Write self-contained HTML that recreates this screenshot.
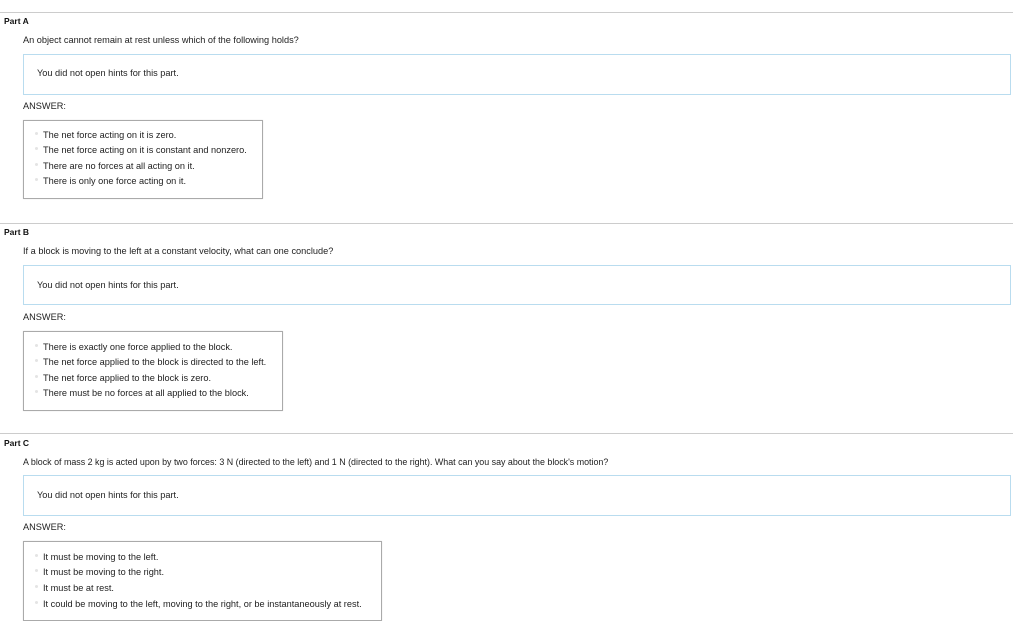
<!DOCTYPE html>
<html><head><style>
body{margin:0;width:1024px;height:621px;background:#fff;font-family:"Liberation Sans",Arial,sans-serif;color:#222;position:relative;overflow:hidden;font-size:9.2px}
.a{position:absolute;white-space:nowrap;line-height:10px}
.hr{position:absolute;left:0;width:1013px;height:1px;background:#ccc}
.h{font-weight:bold;font-size:8.5px;color:#111}
.hint{position:absolute;left:23px;width:988px;height:39px;border:1px solid #b9dcef;box-sizing:border-box}
.box{position:absolute;left:23px;border:1px solid #aaa;box-sizing:border-box;box-shadow:0 0 1px #ddd}
.r{position:absolute;width:3px;height:3px;border-radius:50%;background:#e4e4e4;left:12px}
</style></head><body>
<div class="hr" style="top:12px"></div>
<div class="a h" style="left:4px;top:16px">Part A</div>
<div class="a" style="left:23px;top:35px">An object cannot remain at rest unless which of the following holds?</div>
<div class="hint" style="top:54px;height:41px"></div>
<div class="a" style="left:37px;top:68px">You did not open hints for this part.</div>
<div class="a" style="left:23px;top:101px">ANSWER:</div>
<div class="box" style="top:120px;width:240px;height:79px"></div>
<div class="a" style="left:43px;top:130px">The net force acting on it is zero.</div>
<div class="a" style="left:43px;top:145px">The net force acting on it is constant and nonzero.</div>
<div class="a" style="left:43px;top:161px">There are no forces at all acting on it.</div>
<div class="a" style="left:43px;top:176px">There is only one force acting on it.</div>
<div class="r" style="left:35px;top:132px"></div><div class="r" style="left:35px;top:147px"></div><div class="r" style="left:35px;top:163px"></div><div class="r" style="left:35px;top:178px"></div>

<div class="hr" style="top:223px"></div>
<div class="a h" style="left:4px;top:227px">Part B</div>
<div class="a" style="left:23px;top:246px">If a block is moving to the left at a constant velocity, what can one conclude?</div>
<div class="hint" style="top:265px;height:40px"></div>
<div class="a" style="left:37px;top:280px">You did not open hints for this part.</div>
<div class="a" style="left:23px;top:312px">ANSWER:</div>
<div class="box" style="top:331px;width:260px;height:80px"></div>
<div class="a" style="left:43px;top:342px">There is exactly one force applied to the block.</div>
<div class="a" style="left:43px;top:357px">The net force applied to the block is directed to the left.</div>
<div class="a" style="left:43px;top:373px">The net force applied to the block is zero.</div>
<div class="a" style="left:43px;top:388px">There must be no forces at all applied to the block.</div>
<div class="r" style="left:35px;top:344px"></div><div class="r" style="left:35px;top:359px"></div><div class="r" style="left:35px;top:375px"></div><div class="r" style="left:35px;top:390px"></div>

<div class="hr" style="top:433px"></div>
<div class="a h" style="left:4px;top:438px">Part C</div>
<div class="a" style="left:23px;top:457px;font-size:8.9px">A block of mass 2 kg is acted upon by two forces: 3 N (directed to the left) and 1 N (directed to the right). What can you say about the block's motion?</div>
<div class="hint" style="top:475px;height:41px"></div>
<div class="a" style="left:37px;top:490px">You did not open hints for this part.</div>
<div class="a" style="left:23px;top:522px">ANSWER:</div>
<div class="box" style="top:541px;width:359px;height:80px"></div>
<div class="a" style="left:43px;top:552px">It must be moving to the left.</div>
<div class="a" style="left:43px;top:567px">It must be moving to the right.</div>
<div class="a" style="left:43px;top:583px">It must be at rest.</div>
<div class="a" style="left:43px;top:599px">It could be moving to the left, moving to the right, or be instantaneously at rest.</div>
<div class="r" style="left:35px;top:554px"></div><div class="r" style="left:35px;top:569px"></div><div class="r" style="left:35px;top:585px"></div><div class="r" style="left:35px;top:601px"></div>
</body></html>
